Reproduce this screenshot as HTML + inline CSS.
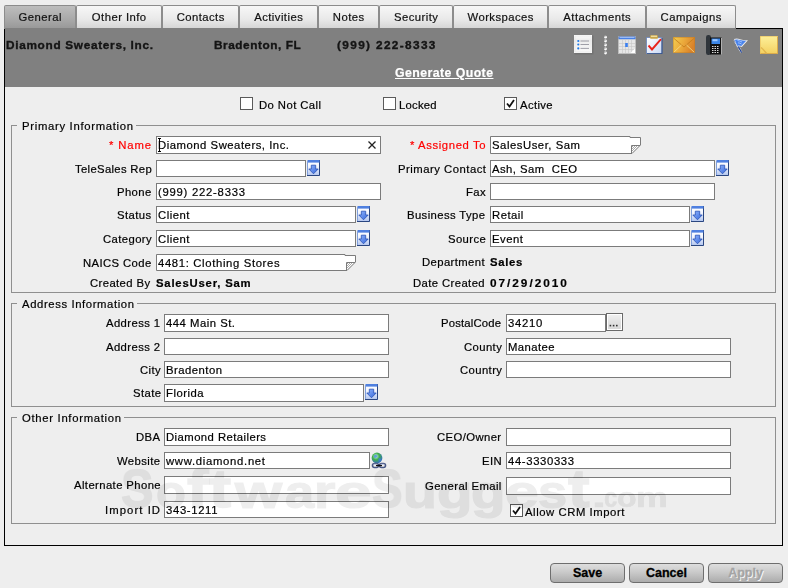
<!DOCTYPE html><html><head><meta charset="utf-8"><style>
html,body{margin:0;padding:0}
body{width:788px;height:588px;overflow:hidden;position:relative;background:#eeeeee;font-family:"Liberation Sans",sans-serif;}
.t{position:absolute;white-space:pre;will-change:transform;-webkit-text-stroke:0.2px currentColor;}
.b{position:absolute;box-sizing:border-box;}
.tab{position:absolute;top:5px;height:23px;box-sizing:border-box;border:1px solid #8c8c8c;border-bottom:none;border-radius:2px 2px 0 0;
 background:linear-gradient(#f7f7f7,#e9e9e9 60%,#d6d6d6);}
.tab.act{background:linear-gradient(#bdbdbd,#a9a9a9 60%,#999);}
.inp{position:absolute;box-sizing:border-box;border:1px solid #7b7b7b;background:#fff;}
.fs{position:absolute;box-sizing:border-box;border:1px solid #8f8f8f;}
.btn{position:absolute;top:563px;height:20px;width:75px;box-sizing:border-box;border:1px solid #6e6e6e;border-radius:4px;
 background:linear-gradient(#dedede,#cacaca 45%,#acacac);font-weight:bold;font-size:12.5px;line-height:18px;text-align:center;color:#000;-webkit-text-stroke:0.3px #000;}
</style></head><body>
<svg width="0" height="0" style="position:absolute"><defs><linearGradient id="ddg" x1="0" y1="0" x2="0" y2="1"><stop offset="0" stop-color="#ffffff"/><stop offset="0.4" stop-color="#f4f7ff"/><stop offset="1" stop-color="#aec2ee"/></linearGradient><linearGradient id="arg" x1="0" y1="0" x2="1" y2="1"><stop offset="0" stop-color="#8fb4ff"/><stop offset="1" stop-color="#3566d8"/></linearGradient><pattern id="hatch" width="2" height="2" patternUnits="userSpaceOnUse"><rect width="2" height="2" fill="#fff"/><rect width="1" height="1" fill="#a8a8a8"/><rect x="1" y="1" width="1" height="1" fill="#a8a8a8"/></pattern></defs></svg>
<div class="tab act" style="left:4px;width:72px;"></div>
<div class="tab" style="left:76px;width:86px;"></div>
<div class="tab" style="left:162px;width:77px;"></div>
<div class="tab" style="left:239px;width:79px;"></div>
<div class="tab" style="left:318px;width:61px;"></div>
<div class="tab" style="left:379px;width:74px;"></div>
<div class="tab" style="left:453px;width:95px;"></div>
<div class="tab" style="left:548px;width:98px;"></div>
<div class="tab" style="left:646px;width:90px;"></div>
<div class="t" style="left:4px;width:72px;text-align:center;top:9.78px;font-size:11.3px;line-height:14px;color:#111;letter-spacing:0.45px;text-indent:0.45px;">General</div>
<div class="t" style="left:76px;width:86px;text-align:center;top:9.78px;font-size:11.3px;line-height:14px;color:#111;letter-spacing:0.45px;text-indent:0.45px;">Other Info</div>
<div class="t" style="left:162px;width:77px;text-align:center;top:9.78px;font-size:11.3px;line-height:14px;color:#111;letter-spacing:0.45px;text-indent:0.45px;">Contacts</div>
<div class="t" style="left:239px;width:79px;text-align:center;top:9.78px;font-size:11.3px;line-height:14px;color:#111;letter-spacing:0.45px;text-indent:0.45px;">Activities</div>
<div class="t" style="left:318px;width:61px;text-align:center;top:9.78px;font-size:11.3px;line-height:14px;color:#111;letter-spacing:0.45px;text-indent:0.45px;">Notes</div>
<div class="t" style="left:379px;width:74px;text-align:center;top:9.78px;font-size:11.3px;line-height:14px;color:#111;letter-spacing:0.45px;text-indent:0.45px;">Security</div>
<div class="t" style="left:453px;width:95px;text-align:center;top:9.78px;font-size:11.3px;line-height:14px;color:#111;letter-spacing:0.45px;text-indent:0.45px;">Workspaces</div>
<div class="t" style="left:548px;width:98px;text-align:center;top:9.78px;font-size:11.3px;line-height:14px;color:#111;letter-spacing:0.45px;text-indent:0.45px;">Attachments</div>
<div class="t" style="left:646px;width:90px;text-align:center;top:9.78px;font-size:11.3px;line-height:14px;color:#111;letter-spacing:0.45px;text-indent:0.45px;">Campaigns</div>
<div class="b" style="left:4px;top:28px;width:779px;height:518px;border:1px solid #000;"></div>
<div class="b" style="left:4px;top:28px;width:1px;height:1px;background:#8c8c8c;"></div>
<div class="b" style="left:5px;top:28px;width:777px;height:59px;background:#808080;"></div>
<div class="b" style="left:736px;top:28px;width:47px;height:1px;background:#000;"></div>
<div class="t" style="top:37.81px;font-size:11.8px;line-height:14px;color:#141414;font-weight:bold;letter-spacing:0.694px;left:5.5px;-webkit-text-stroke:0.35px #141414;">Diamond Sweaters, Inc.</div>
<div class="t" style="top:37.81px;font-size:11.8px;line-height:14px;color:#141414;font-weight:bold;letter-spacing:0.554px;left:214.3px;-webkit-text-stroke:0.35px #141414;">Bradenton, FL</div>
<div class="t" style="top:37.81px;font-size:11.8px;line-height:14px;color:#141414;font-weight:bold;letter-spacing:1.364px;left:337px;-webkit-text-stroke:0.35px #141414;">(999) 222-8333</div>
<div class="t" style="top:66.24px;font-size:12.3px;line-height:15px;color:#fff;font-weight:bold;letter-spacing:0.442px;left:395px;text-decoration:underline;">Generate Quote</div>
<svg style="position:absolute;left:573px;top:34px" width="21" height="21">
<defs><linearGradient id="lg1" x1="0" y1="0" x2="0" y2="1"><stop offset="0" stop-color="#fdfdfd"/><stop offset="0.3" stop-color="#ececec"/><stop offset="1" stop-color="#fafafa"/></linearGradient></defs>
<rect x="1.5" y="1.5" width="19" height="19" fill="#6a6a6a" opacity="0.6"/>
<rect x="1" y="1" width="18" height="18" fill="url(#lg1)"/>
<rect x="2" y="2" width="16" height="16" fill="none" stroke="#e4e4e4" stroke-width="0.6"/>
<circle cx="5.3" cy="7" r="1.1" fill="#1f7ae8"/><circle cx="5.3" cy="10.5" r="1.1" fill="#1f7ae8"/><circle cx="5.3" cy="14.4" r="1.1" fill="#1f7ae8"/>
<path d="M7.5 7 H16 M7.5 10.5 H16 M7.5 14.4 H16" stroke="#6a6a78" stroke-width="1" opacity="0.6"/>
</svg>
<svg style="position:absolute;left:603px;top:35px" width="5" height="20">
<g fill="#fff"><circle cx="2.5" cy="2.2" r="1.4"/><circle cx="2.5" cy="6" r="1.4"/><circle cx="2.5" cy="10" r="1.4"/><circle cx="2.5" cy="14" r="1.4"/><circle cx="2.5" cy="18" r="1.4"/></g>
<g fill="#b0b0b0"><circle cx="1.8" cy="1.6" r="0.8"/><circle cx="1.8" cy="5.4" r="0.8"/><circle cx="1.8" cy="9.4" r="0.8"/><circle cx="1.8" cy="13.4" r="0.8"/><circle cx="1.8" cy="17.4" r="0.8"/></g>
</svg>
<svg style="position:absolute;left:618px;top:36px" width="18" height="18">
<rect x="0" y="0" width="18" height="18" fill="#dcdcdc"/>
<rect x="0" y="0" width="18" height="3.2" fill="#3f7be6"/>
<path d="M1.5 1.6 H16.5" stroke="#cfe0ff" stroke-width="0.7"/>
<rect x="1" y="4" width="16" height="13" fill="#e6e6e6"/>
<g stroke="#c6c6c6" stroke-width="0.6"><path d="M1 7.5 H17 M1 10.5 H17 M1 13.5 H17 M4.5 4 V17 M7.5 4 V17 M10.5 4 V17 M13.5 4 V17"/></g>
<rect x="7.2" y="7" width="2.6" height="4" fill="#3a7ff0"/>
<path d="M12.5 17 L17 12.5 V17 Z" fill="#fff"/>
<rect x="0.3" y="0.3" width="17.4" height="17.4" fill="none" stroke="#a8a8a8" stroke-width="0.6"/>
</svg>
<svg style="position:absolute;left:646px;top:35px" width="17" height="19">
<defs><linearGradient id="cb" x1="0" y1="0" x2="1" y2="1"><stop offset="0" stop-color="#ffffff"/><stop offset="1" stop-color="#c9d8f4"/></linearGradient></defs>
<rect x="0.5" y="2.5" width="15.5" height="16" fill="url(#cb)" stroke="#6b86b8" stroke-width="0.8"/>
<path d="M16 3 V18.8 H1" fill="none" stroke="#2d4c86" stroke-width="1"/>
<rect x="4" y="0.2" width="8" height="3.6" rx="1" fill="#c9a64a"/>
<rect x="5" y="0.6" width="6" height="1.4" fill="#efdc9a"/>
<path d="M2.5 10.5 L6 14.5 L15 4.2" fill="none" stroke="#e8231c" stroke-width="1.9"/>
</svg>
<svg style="position:absolute;left:673px;top:37px" width="22" height="16">
<defs><linearGradient id="env" x1="0" y1="0" x2="1" y2="0.3"><stop offset="0" stop-color="#f3cf50"/><stop offset="0.55" stop-color="#eaa73a"/><stop offset="1" stop-color="#d9822a"/></linearGradient></defs>
<rect x="0" y="0" width="22" height="16" fill="url(#env)"/>
<path d="M0.5 1 L11 10 L21.5 1" fill="none" stroke="#c27a1c" stroke-width="1" opacity="0.8"/>
<path d="M0.5 15.5 L8.5 8 M21.5 15.5 L13.5 8" fill="none" stroke="#f7e08a" stroke-width="0.9" opacity="0.9"/>
<rect x="0.3" y="0.3" width="21.4" height="15.4" fill="none" stroke="#b87a2a" stroke-width="0.6" opacity="0.7"/>
</svg>
<svg style="position:absolute;left:706px;top:35px" width="16" height="20">
<rect x="0" y="0" width="5" height="20" rx="2.2" fill="#2f353b"/>
<rect x="4" y="2.5" width="11.5" height="17" fill="#111"/>
<rect x="5.5" y="3.5" width="8.5" height="5.5" fill="#3b86e8"/>
<rect x="6.5" y="4.2" width="5" height="2" fill="#9cc8ff"/>
<g fill="#d8d8d8"><rect x="6" y="11" width="1.5" height="1"/><rect x="8.5" y="11" width="1.5" height="1"/><rect x="11" y="11" width="1.5" height="1"/><rect x="6" y="13" width="1.5" height="1"/><rect x="8.5" y="13" width="1.5" height="1"/><rect x="11" y="13" width="1.5" height="1"/><rect x="6" y="15" width="1.5" height="1"/><rect x="8.5" y="15" width="1.5" height="1"/><rect x="11" y="15" width="1.5" height="1"/><rect x="6" y="17" width="1.5" height="1"/><rect x="8.5" y="17" width="1.5" height="1"/><rect x="11" y="17" width="1.5" height="1"/></g>
<path d="M15.5 3 V19.5" stroke="#e0e0e0" stroke-width="0.7"/>
</svg>
<svg style="position:absolute;left:732px;top:37px" width="18" height="17">
<path d="M2.6 3 L9.6 15.6" stroke="#e8f0ff" stroke-width="2.2" stroke-dasharray="1 0.6"/>
<path d="M2.6 3 L9.6 15.6" stroke="#1d3f9a" stroke-width="1.1"/>
<path d="M2 2 Q5 1 8 2.3 Q12 3.5 16 3.2 L9.8 10 Q7 8.8 5 9.8 Z" fill="#ffffff" opacity="0.85"/>
<path d="M2.8 2.8 Q5.5 2 8 3 Q11 4 14.2 3.8 L9.3 9 Q7 8 5.2 8.8 Z" fill="#4a84ec"/>
<path d="M5.5 3.5 Q8 4 10 5 M6 5.8 Q8 6 9.5 7" stroke="#a6c6ff" stroke-width="0.9" fill="none"/>
</svg>
<svg style="position:absolute;left:760px;top:36px" width="18" height="18">
<defs><linearGradient id="stk" x1="0" y1="0" x2="0" y2="1"><stop offset="0" stop-color="#fdf09a"/><stop offset="1" stop-color="#f3d060"/></linearGradient></defs>
<rect x="0" y="0" width="18" height="18" fill="url(#stk)"/>
<path d="M17.5 0.5 V17.5 H0.5" fill="none" stroke="#c7902e" stroke-width="1"/>
<path d="M1 11.5 Q4 14 6.5 17.5" stroke="#d9a640" stroke-width="1.4" fill="none" opacity="0.7"/>
<rect x="0.3" y="0.3" width="17.4" height="17.4" fill="none" stroke="#e8c060" stroke-width="0.6"/>
</svg>

<div class="b" style="left:240px;top:97px;width:13px;height:13px;border:1px solid #5a5a5a;background:#fff;"></div>
<div class="t" style="top:97.88px;font-size:11.3px;line-height:14px;color:#000;letter-spacing:0.424px;left:259px;">Do Not Call</div>
<div class="b" style="left:383px;top:97px;width:13px;height:13px;border:1px solid #5a5a5a;background:#fff;"></div>
<div class="t" style="top:97.88px;font-size:11.3px;line-height:14px;color:#000;letter-spacing:0.234px;left:399.4px;">Locked</div>
<div class="b" style="left:504px;top:97px;width:13px;height:13px;border:1px solid #5a5a5a;background:#fff;"></div>
<svg style="position:absolute;left:504px;top:97px" width="13" height="13"><path d="M3 6.5 L5.5 9.5 L10 3" fill="none" stroke="#111" stroke-width="1.8"/></svg>
<div class="t" style="top:97.88px;font-size:11.3px;line-height:14px;color:#000;letter-spacing:0.367px;left:520.2px;">Active</div>
<div class="fs" style="left:11px;top:125px;width:765px;height:168px;"></div>
<div class="b" style="left:17px;top:123px;width:119px;height:5px;background:#eeeeee;"></div>
<div class="t" style="top:119.08px;font-size:11.3px;line-height:14px;color:#000;letter-spacing:0.691px;left:21.5px;">Primary Information</div>
<div class="fs" style="left:11px;top:303px;width:765px;height:104px;"></div>
<div class="b" style="left:17px;top:301px;width:120px;height:5px;background:#eeeeee;"></div>
<div class="t" style="top:297.08px;font-size:11.3px;line-height:14px;color:#000;letter-spacing:0.606px;left:21.5px;">Address Information</div>
<div class="fs" style="left:11px;top:417px;width:765px;height:107px;"></div>
<div class="b" style="left:17px;top:415px;width:107px;height:5px;background:#eeeeee;"></div>
<div class="t" style="top:411.08px;font-size:11.3px;line-height:14px;color:#000;letter-spacing:0.694px;left:21.5px;">Other Information</div>
<div class="t" style="top:138.48px;font-size:11.3px;line-height:14px;color:#ff0000;letter-spacing:0.866px;margin-right:-0.866px;right:636.5px;">* Name</div>
<div class="inp" style="left:156px;top:136px;width:225px;height:18px;"></div>
<div class="t" style="top:138.48px;font-size:11.3px;line-height:14px;color:#000;letter-spacing:0.527px;left:158.2px;">Diamond Sweaters, Inc.</div>
<svg style="position:absolute;left:367px;top:140px" width="10" height="10"><path d="M1.5 1.5 L8.5 8.5 M8.5 1.5 L1.5 8.5" stroke="#222" stroke-width="1.3"/></svg>
<svg style="position:absolute;left:157px;top:137px" width="5" height="16"><path d="M2.5 1.5 V14.5 M1 1.5 H4 M1 14.5 H4" stroke="#000" stroke-width="1"/></svg>
<div class="t" style="top:162.48px;font-size:11.3px;line-height:14px;color:#000;letter-spacing:0.325px;margin-right:-0.325px;right:636.5px;">TeleSales Rep</div>
<div class="inp" style="left:156px;top:160px;width:150px;height:17px;"></div>
<svg style="position:absolute;left:307px;top:160px" width="13" height="16"><rect x="0" y="0" width="13" height="16" fill="url(#ddg)"/><path d="M0.5 16 V0.5 H13" fill="none" stroke="#7f9fdc"/><path d="M12.5 0 V15.5 H0" fill="none" stroke="#2a4680"/><rect x="1" y="0" width="11.5" height="2.6" fill="#4f80e0"/><path d="M4.3 5.2 H8.7 V9 H11.2 L6.5 13.8 L1.8 9 H4.3 Z" fill="url(#arg)" stroke="#2852b4" stroke-width="0.8"/></svg>
<div class="t" style="top:185.48px;font-size:11.3px;line-height:14px;color:#000;letter-spacing:0.4px;right:636.5px;margin-right:-0.4px;">Phone</div>
<div class="inp" style="left:156px;top:183px;width:225px;height:17px;"></div>
<div class="t" style="top:185.48px;font-size:11.3px;line-height:14px;color:#000;letter-spacing:0.750px;left:158.2px;">(999) 222-8333</div>
<div class="t" style="top:208.48px;font-size:11.3px;line-height:14px;color:#000;letter-spacing:0.4px;right:636.5px;margin-right:-0.4px;">Status</div>
<div class="inp" style="left:156px;top:206px;width:200px;height:17px;"></div>
<div class="t" style="top:208.48px;font-size:11.3px;line-height:14px;color:#000;letter-spacing:0.5px;left:158.2px;">Client</div>
<svg style="position:absolute;left:357px;top:206px" width="13" height="16"><rect x="0" y="0" width="13" height="16" fill="url(#ddg)"/><path d="M0.5 16 V0.5 H13" fill="none" stroke="#7f9fdc"/><path d="M12.5 0 V15.5 H0" fill="none" stroke="#2a4680"/><rect x="1" y="0" width="11.5" height="2.6" fill="#4f80e0"/><path d="M4.3 5.2 H8.7 V9 H11.2 L6.5 13.8 L1.8 9 H4.3 Z" fill="url(#arg)" stroke="#2852b4" stroke-width="0.8"/></svg>
<div class="t" style="top:232.48px;font-size:11.3px;line-height:14px;color:#000;letter-spacing:0.4px;right:636.5px;margin-right:-0.4px;">Category</div>
<div class="inp" style="left:156px;top:230px;width:200px;height:17px;"></div>
<div class="t" style="top:232.48px;font-size:11.3px;line-height:14px;color:#000;letter-spacing:0.5px;left:158.2px;">Client</div>
<svg style="position:absolute;left:357px;top:230px" width="13" height="16"><rect x="0" y="0" width="13" height="16" fill="url(#ddg)"/><path d="M0.5 16 V0.5 H13" fill="none" stroke="#7f9fdc"/><path d="M12.5 0 V15.5 H0" fill="none" stroke="#2a4680"/><rect x="1" y="0" width="11.5" height="2.6" fill="#4f80e0"/><path d="M4.3 5.2 H8.7 V9 H11.2 L6.5 13.8 L1.8 9 H4.3 Z" fill="url(#arg)" stroke="#2852b4" stroke-width="0.8"/></svg>
<div class="t" style="top:256.48px;font-size:11.3px;line-height:14px;color:#000;letter-spacing:0.4px;right:636.5px;margin-right:-0.4px;">NAICS Code</div>
<svg style="position:absolute;left:156px;top:254px" width="200" height="17"><path d="M0.5 0.5 H189 V1.5 H199.5 V8 L191 16.5 H0.5 Z" fill="#fff" stroke="#7b7b7b" stroke-width="1"/><path d="M190.5 16.5 V8.5 H199" fill="none" stroke="#7b7b7b"/><path d="M191 16 V9 H198 Z" fill="url(#hatch)"/></svg>
<div class="t" style="top:256.48px;font-size:11.3px;line-height:14px;color:#000;letter-spacing:0.648px;left:158.2px;">4481: Clothing Stores</div>
<div class="t" style="top:276.08px;font-size:11.3px;line-height:14px;color:#000;letter-spacing:0.4px;right:637px;">Created By</div>
<div class="t" style="top:276.08px;font-size:11.3px;line-height:14px;color:#000;font-weight:bold;letter-spacing:0.803px;left:156px;">SalesUser, Sam</div>
<div class="t" style="top:138.48px;font-size:11.3px;line-height:14px;color:#ff0000;letter-spacing:0.602px;margin-right:-0.602px;right:302.5px;">* Assigned To</div>
<svg style="position:absolute;left:490px;top:136px" width="151" height="18"><path d="M0.5 0.5 H140 V1.5 H150.5 V9 L142 17.5 H0.5 Z" fill="#fff" stroke="#7b7b7b" stroke-width="1"/><path d="M141.5 17.5 V9.5 H150" fill="none" stroke="#7b7b7b"/><path d="M142 17 V10 H149 Z" fill="url(#hatch)"/></svg>
<div class="t" style="top:138.48px;font-size:11.3px;line-height:14px;color:#000;letter-spacing:0.539px;left:492.2px;">SalesUser, Sam</div>
<div class="t" style="top:162.48px;font-size:11.3px;line-height:14px;color:#000;letter-spacing:0.501px;margin-right:-0.501px;right:302.5px;">Primary Contact</div>
<div class="inp" style="left:490px;top:160px;width:225px;height:17px;"></div>
<div class="t" style="top:162.48px;font-size:11.3px;line-height:14px;color:#000;letter-spacing:0.439px;left:492.2px;">Ash, Sam  CEO</div>
<svg style="position:absolute;left:716px;top:160px" width="13" height="16"><rect x="0" y="0" width="13" height="16" fill="url(#ddg)"/><path d="M0.5 16 V0.5 H13" fill="none" stroke="#7f9fdc"/><path d="M12.5 0 V15.5 H0" fill="none" stroke="#2a4680"/><rect x="1" y="0" width="11.5" height="2.6" fill="#4f80e0"/><path d="M4.3 5.2 H8.7 V9 H11.2 L6.5 13.8 L1.8 9 H4.3 Z" fill="url(#arg)" stroke="#2852b4" stroke-width="0.8"/></svg>
<div class="t" style="top:185.48px;font-size:11.3px;line-height:14px;color:#000;letter-spacing:0.4px;right:302.5px;margin-right:-0.4px;">Fax</div>
<div class="inp" style="left:490px;top:183px;width:225px;height:17px;"></div>
<div class="t" style="top:208.48px;font-size:11.3px;line-height:14px;color:#000;letter-spacing:0.4px;right:302.5px;margin-right:-0.4px;">Business Type</div>
<div class="inp" style="left:490px;top:206px;width:200px;height:17px;"></div>
<div class="t" style="top:208.48px;font-size:11.3px;line-height:14px;color:#000;letter-spacing:0.5px;left:492.2px;">Retail</div>
<svg style="position:absolute;left:691px;top:206px" width="13" height="16"><rect x="0" y="0" width="13" height="16" fill="url(#ddg)"/><path d="M0.5 16 V0.5 H13" fill="none" stroke="#7f9fdc"/><path d="M12.5 0 V15.5 H0" fill="none" stroke="#2a4680"/><rect x="1" y="0" width="11.5" height="2.6" fill="#4f80e0"/><path d="M4.3 5.2 H8.7 V9 H11.2 L6.5 13.8 L1.8 9 H4.3 Z" fill="url(#arg)" stroke="#2852b4" stroke-width="0.8"/></svg>
<div class="t" style="top:232.48px;font-size:11.3px;line-height:14px;color:#000;letter-spacing:0.4px;right:302.5px;margin-right:-0.4px;">Source</div>
<div class="inp" style="left:490px;top:230px;width:200px;height:17px;"></div>
<div class="t" style="top:232.48px;font-size:11.3px;line-height:14px;color:#000;letter-spacing:0.5px;left:492.2px;">Event</div>
<svg style="position:absolute;left:691px;top:230px" width="13" height="16"><rect x="0" y="0" width="13" height="16" fill="url(#ddg)"/><path d="M0.5 16 V0.5 H13" fill="none" stroke="#7f9fdc"/><path d="M12.5 0 V15.5 H0" fill="none" stroke="#2a4680"/><rect x="1" y="0" width="11.5" height="2.6" fill="#4f80e0"/><path d="M4.3 5.2 H8.7 V9 H11.2 L6.5 13.8 L1.8 9 H4.3 Z" fill="url(#arg)" stroke="#2852b4" stroke-width="0.8"/></svg>
<div class="t" style="top:255.08px;font-size:11.3px;line-height:14px;color:#000;letter-spacing:0.4px;right:303px;">Department</div>
<div class="t" style="top:255.08px;font-size:11.3px;line-height:14px;color:#000;font-weight:bold;letter-spacing:0.7px;left:490px;">Sales</div>
<div class="t" style="top:276.08px;font-size:11.3px;line-height:14px;color:#000;letter-spacing:0.4px;right:303px;">Date Created</div>
<div class="t" style="top:275.91px;font-size:11.8px;line-height:14px;color:#000;font-weight:bold;letter-spacing:1.973px;left:490px;">07/29/2010</div>
<div class="t" style="top:316.48px;font-size:11.3px;line-height:14px;color:#000;letter-spacing:0.4px;right:627.5px;margin-right:-0.4px;">Address 1</div>
<div class="inp" style="left:164px;top:314px;width:225px;height:18px;"></div>
<div class="t" style="top:316.48px;font-size:11.3px;line-height:14px;color:#000;letter-spacing:0.507px;left:166.2px;">444 Main St.</div>
<div class="t" style="top:340.48px;font-size:11.3px;line-height:14px;color:#000;letter-spacing:0.4px;right:627.5px;margin-right:-0.4px;">Address 2</div>
<div class="inp" style="left:164px;top:338px;width:225px;height:17px;"></div>
<div class="t" style="top:363.48px;font-size:11.3px;line-height:14px;color:#000;letter-spacing:0.4px;right:627.5px;margin-right:-0.4px;">City</div>
<div class="inp" style="left:164px;top:361px;width:225px;height:17px;"></div>
<div class="t" style="top:363.48px;font-size:11.3px;line-height:14px;color:#000;letter-spacing:0.483px;left:166.2px;">Bradenton</div>
<div class="t" style="top:386.48px;font-size:11.3px;line-height:14px;color:#000;letter-spacing:0.4px;right:627.5px;margin-right:-0.4px;">State</div>
<div class="inp" style="left:164px;top:384px;width:200px;height:18px;"></div>
<div class="t" style="top:386.48px;font-size:11.3px;line-height:14px;color:#000;letter-spacing:0.5px;left:166.2px;">Florida</div>
<svg style="position:absolute;left:365px;top:384px" width="13" height="16"><rect x="0" y="0" width="13" height="16" fill="url(#ddg)"/><path d="M0.5 16 V0.5 H13" fill="none" stroke="#7f9fdc"/><path d="M12.5 0 V15.5 H0" fill="none" stroke="#2a4680"/><rect x="1" y="0" width="11.5" height="2.6" fill="#4f80e0"/><path d="M4.3 5.2 H8.7 V9 H11.2 L6.5 13.8 L1.8 9 H4.3 Z" fill="url(#arg)" stroke="#2852b4" stroke-width="0.8"/></svg>
<div class="t" style="top:316.48px;font-size:11.3px;line-height:14px;color:#000;letter-spacing:0.177px;margin-right:-0.177px;right:286.5px;">PostalCode</div>
<div class="inp" style="left:506px;top:314px;width:100px;height:18px;"></div>
<div class="t" style="top:316.48px;font-size:11.3px;line-height:14px;color:#000;letter-spacing:0.697px;left:508.2px;">34210</div>
<div class="b" style="left:606px;top:313px;width:17px;height:18px;border:1px solid #6a6a6a;box-shadow:inset 0 0 0 1px #fff;background:linear-gradient(#f2f2f2,#e2e2e2 50%,#d8d8d8);"></div>
<svg style="position:absolute;left:606px;top:313px" width="17" height="18"><g fill="#333"><rect x="3.6" y="11.8" width="1.6" height="1.6"/><rect x="6.8" y="11.8" width="1.6" height="1.6"/><rect x="10" y="11.8" width="1.6" height="1.6"/></g></svg>
<div class="t" style="top:340.48px;font-size:11.3px;line-height:14px;color:#000;letter-spacing:0.4px;right:286.5px;margin-right:-0.4px;">County</div>
<div class="inp" style="left:506px;top:338px;width:225px;height:17px;"></div>
<div class="t" style="top:340.48px;font-size:11.3px;line-height:14px;color:#000;letter-spacing:0.440px;left:508.2px;">Manatee</div>
<div class="t" style="top:363.48px;font-size:11.3px;line-height:14px;color:#000;letter-spacing:0.4px;right:286.5px;margin-right:-0.4px;">Country</div>
<div class="inp" style="left:506px;top:361px;width:225px;height:17px;"></div>
<div class="t" style="top:430.48px;font-size:11.3px;line-height:14px;color:#000;letter-spacing:0.4px;right:627.5px;margin-right:-0.4px;">DBA</div>
<div class="inp" style="left:164px;top:428px;width:225px;height:18px;"></div>
<div class="t" style="top:430.48px;font-size:11.3px;line-height:14px;color:#000;letter-spacing:0.442px;left:166.2px;">Diamond Retailers</div>
<div class="t" style="top:454.48px;font-size:11.3px;line-height:14px;color:#000;letter-spacing:0.4px;right:627.5px;margin-right:-0.4px;">Website</div>
<div class="inp" style="left:164px;top:452px;width:206px;height:17px;"></div>
<div class="t" style="top:454.48px;font-size:11.3px;line-height:14px;color:#000;letter-spacing:0.702px;left:166.2px;">www.diamond.net</div>
<svg style="position:absolute;left:371px;top:452px" width="17" height="17">
<defs><radialGradient id="gl" cx="0.4" cy="0.35" r="0.7"><stop offset="0" stop-color="#c8f0ff"/><stop offset="0.45" stop-color="#3fae4a"/><stop offset="1" stop-color="#3566d0"/></radialGradient></defs>
<circle cx="6" cy="6" r="5.4" fill="url(#gl)"/>
<path d="M3 3.5 Q5 2.5 6.5 4 Q5.5 6 3.5 6 Z M7.5 6 Q9.5 5.5 10.5 7.5 Q9 10 7.5 9.5 Z" fill="#3a7ae0" opacity="0.7"/>
<g fill="none" stroke="#4a5a86" stroke-width="1.6">
<rect x="1.5" y="11.5" width="6" height="4" rx="2"/>
<rect x="8.5" y="11.5" width="6" height="4" rx="2"/>
</g>
<path d="M5 13.5 H11" stroke="#111" stroke-width="1.4"/>
<g fill="none" stroke="#c8d4f0" stroke-width="0.6"><path d="M2.5 12.3 H6.5 M9.5 12.3 H13.5"/></g>
</svg>

<div class="t" style="top:478.48px;font-size:11.3px;line-height:14px;color:#000;letter-spacing:0.4px;right:627.5px;margin-right:-0.4px;">Alternate Phone</div>
<div class="inp" style="left:164px;top:476px;width:225px;height:18px;"></div>
<div class="t" style="top:503.48px;font-size:11.3px;line-height:14px;color:#000;letter-spacing:1.069px;margin-right:-1.069px;right:627.5px;">Import ID</div>
<div class="inp" style="left:164px;top:501px;width:225px;height:17px;"></div>
<div class="t" style="top:503.48px;font-size:11.3px;line-height:14px;color:#000;letter-spacing:0.657px;left:166.2px;">343-1211</div>
<div class="t" style="top:430.48px;font-size:11.3px;line-height:14px;color:#000;letter-spacing:0.4px;right:286.5px;margin-right:-0.4px;">CEO/Owner</div>
<div class="inp" style="left:506px;top:428px;width:225px;height:18px;"></div>
<div class="t" style="top:454.48px;font-size:11.3px;line-height:14px;color:#000;letter-spacing:0.4px;right:286.5px;margin-right:-0.4px;">EIN</div>
<div class="inp" style="left:506px;top:452px;width:225px;height:17px;"></div>
<div class="t" style="top:454.48px;font-size:11.3px;line-height:14px;color:#000;letter-spacing:0.633px;left:508.2px;">44-3330333</div>
<div class="t" style="top:479.48px;font-size:11.3px;line-height:14px;color:#000;letter-spacing:0.4px;right:286.5px;margin-right:-0.4px;">General Email</div>
<div class="inp" style="left:506px;top:477px;width:225px;height:18px;"></div>
<div class="b" style="left:510px;top:504px;width:13px;height:13px;border:1px solid #5a5a5a;background:#fff;"></div>
<svg style="position:absolute;left:510px;top:504px" width="13" height="13"><path d="M3 6.5 L5.5 9.5 L10 3" fill="none" stroke="#111" stroke-width="1.8"/></svg>
<div class="t" style="top:505.08px;font-size:11.3px;line-height:14px;color:#000;letter-spacing:0.559px;left:525.4px;">Allow CRM Import</div>
<div class="t" style="left:120.90px;top:462.21px;font-size:53.5px;line-height:53.5px;font-weight:bold;color:#000;-webkit-text-stroke:1.40px #000;opacity:0.07;transform-origin:0 0;transform:scaleX(0.908);">S</div>
<div class="t" style="left:155.70px;top:467.71px;font-size:47px;line-height:47px;font-weight:bold;color:#000;-webkit-text-stroke:1.23px #000;opacity:0.07;transform-origin:0 0;transform:scaleX(1.041);">o</div>
<div class="t" style="left:187.20px;top:462.21px;font-size:53.5px;line-height:53.5px;font-weight:bold;color:#000;-webkit-text-stroke:1.40px #000;opacity:0.07;transform-origin:0 0;transform:scaleX(1.205);">f</div>
<div class="t" style="left:209.39px;top:462.21px;font-size:53.5px;line-height:53.5px;font-weight:bold;color:#000;-webkit-text-stroke:1.40px #000;opacity:0.07;transform-origin:0 0;transform:scaleX(1.242);">t</div>
<div class="t" style="left:234.59px;top:467.71px;font-size:47px;line-height:47px;font-weight:bold;color:#000;-webkit-text-stroke:1.23px #000;opacity:0.07;transform-origin:0 0;transform:scaleX(1.290);">w</div>
<div class="t" style="left:284.88px;top:467.71px;font-size:47px;line-height:47px;font-weight:bold;color:#000;-webkit-text-stroke:1.23px #000;opacity:0.07;transform-origin:0 0;transform:scaleX(1.116);">a</div>
<div class="t" style="left:313.58px;top:467.71px;font-size:47px;line-height:47px;font-weight:bold;color:#000;-webkit-text-stroke:1.23px #000;opacity:0.07;transform-origin:0 0;transform:scaleX(1.172);">r</div>
<div class="t" style="left:335.25px;top:467.71px;font-size:47px;line-height:47px;font-weight:bold;color:#000;-webkit-text-stroke:1.23px #000;opacity:0.07;transform-origin:0 0;transform:scaleX(1.400);">e</div>
<div class="t" style="left:372.08px;top:462.21px;font-size:53.5px;line-height:53.5px;font-weight:bold;color:#000;-webkit-text-stroke:1.40px #000;opacity:0.07;transform-origin:0 0;transform:scaleX(0.858);">S</div>
<div class="t" style="left:403.18px;top:467.71px;font-size:47px;line-height:47px;font-weight:bold;color:#000;-webkit-text-stroke:1.23px #000;opacity:0.07;transform-origin:0 0;transform:scaleX(1.179);">u</div>
<div class="t" style="left:437.03px;top:467.71px;font-size:47px;line-height:47px;font-weight:bold;color:#000;-webkit-text-stroke:1.23px #000;opacity:0.07;transform-origin:0 0;transform:scaleX(1.238);">g</div>
<div class="t" style="left:470.89px;top:467.71px;font-size:47px;line-height:47px;font-weight:bold;color:#000;-webkit-text-stroke:1.23px #000;opacity:0.07;transform-origin:0 0;transform:scaleX(1.204);">g</div>
<div class="t" style="left:504.85px;top:467.71px;font-size:47px;line-height:47px;font-weight:bold;color:#000;-webkit-text-stroke:1.23px #000;opacity:0.07;transform-origin:0 0;transform:scaleX(1.290);">e</div>
<div class="t" style="left:538.37px;top:467.71px;font-size:47px;line-height:47px;font-weight:bold;color:#000;-webkit-text-stroke:1.23px #000;opacity:0.07;transform-origin:0 0;transform:scaleX(1.116);">s</div>
<div class="t" style="left:567.61px;top:462.21px;font-size:53.5px;line-height:53.5px;font-weight:bold;color:#000;-webkit-text-stroke:1.40px #000;opacity:0.07;transform-origin:0 0;transform:scaleX(1.211);">t</div>
<div class="t" style="left:591.97px;top:483.80px;font-size:28px;line-height:28px;font-weight:bold;color:#000;-webkit-text-stroke:0.73px #000;opacity:0.07;transform-origin:0 0;transform:scaleX(1.789);">.</div>
<div class="t" style="left:604.14px;top:483.80px;font-size:28px;line-height:28px;font-weight:bold;color:#000;-webkit-text-stroke:0.73px #000;opacity:0.07;transform-origin:0 0;transform:scaleX(0.847);">c</div>
<div class="t" style="left:617.11px;top:483.80px;font-size:28px;line-height:28px;font-weight:bold;color:#000;-webkit-text-stroke:0.73px #000;opacity:0.07;transform-origin:0 0;transform:scaleX(1.144);">o</div>
<div class="t" style="left:636.41px;top:483.80px;font-size:28px;line-height:28px;font-weight:bold;color:#000;-webkit-text-stroke:0.73px #000;opacity:0.07;transform-origin:0 0;transform:scaleX(1.275);">m</div>
<div class="btn" style="left:550px;">Save</div><div class="btn" style="left:629px;">Cancel</div><div class="btn" style="left:708px;color:#a4a4a4;-webkit-text-stroke:0.3px #a4a4a4;text-shadow:1px 1px 0 #fafafa;">Apply</div>
</body></html>
